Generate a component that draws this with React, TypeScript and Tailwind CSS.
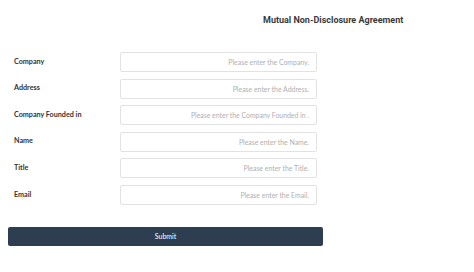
const fields = [
  { label: "Company", placeholder: "Please enter the Company." },
  { label: "Address", placeholder: "Please enter the Address." },
  { label: "Company Founded in", placeholder: "Please enter the Company Founded in ." },
  { label: "Name", placeholder: "Please enter the Name." },
  { label: "Title", placeholder: "Please enter the Title." },
  { label: "Email", placeholder: "Please enter the Email." },
];

export default function App() {
  return (
    <div className="w-[474px] h-[272px] bg-white overflow-hidden font-['Lato',sans-serif]">
      <h1 className="pt-[14px] pl-[263px] h-[52px] text-[9px] leading-[12px] font-bold text-[#3a3a3a] font-['Roboto',sans-serif]">
        Mutual Non-Disclosure Agreement
      </h1>
      <form className="flex flex-col gap-[6.6px]">
        {fields.map((f) => (
          <div key={f.label} className="flex items-center h-[20px]">
            <label className="w-[120px] pl-[14px] text-[7.2px] font-bold text-[#333]">
              {f.label}
            </label>
            <input
              type="text"
              placeholder={f.placeholder}
              className="w-[197px] h-[20px] border border-[#e2e2e2] rounded-[2px] px-[7px] text-right text-[6.9px] placeholder:text-[#b0b0b0] outline-none"
            />
          </div>
        ))}
      </form>
      <div className="flex pl-[8px] pt-[22px]">
        <button
          type="button"
          className="block w-[315px] h-[19px] bg-[#2c3e50] rounded-[2px] text-white text-[7px] leading-[19px]"
        >
          Submit
        </button>
      </div>
    </div>
  );
}
